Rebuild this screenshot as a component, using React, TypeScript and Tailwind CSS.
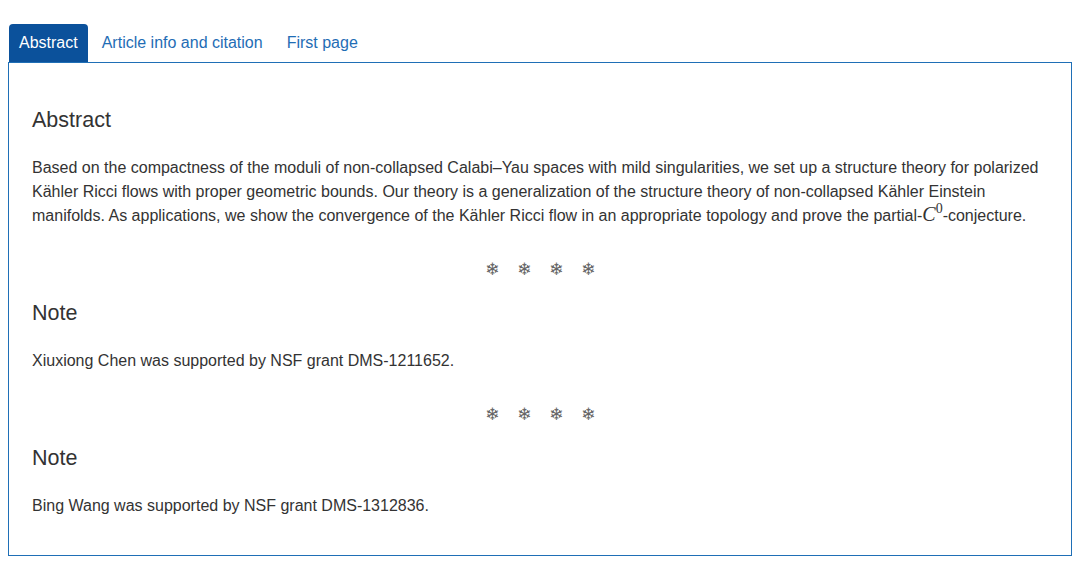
import { useState } from "react";

const tabs = ["Abstract", "Article info and citation", "First page"];

const Stars = () => (
  <div className="flex justify-center h-[14px] items-center text-[17px] leading-none text-[#666] font-['DejaVu_Sans',sans-serif] mt-[34px] mb-[24px]">
    <span className="w-[32px] text-center">❄</span>
    <span className="w-[32px] text-center">❄</span>
    <span className="w-[32px] text-center">❄</span>
    <span className="w-[32px] text-center">❄</span>
  </div>
);

const App = () => {
  const [active, setActive] = useState(0);

  return (
    <div className="w-[1080px] h-[566px] bg-white font-['Liberation_Sans',Arial,sans-serif] text-[#333] pt-[24px] pl-[8px] pr-[8px]">
      <div className="flex pl-[1px]">
        {tabs.map((t, i) => (
          <button
            key={t}
            onClick={() => setActive(i)}
            className={`h-[38px] px-[10px] mr-[4px] text-[16px] rounded-t-[4px] ${
              active === i ? "bg-[#0b519b] text-white" : "text-[#1f6db5]"
            }`}
          >
            {t}
          </button>
        ))}
      </div>
      <div className="w-[1064px] h-[494px] border border-[#1f6fb6] px-[23px] pt-[44px]">
        <h2 className="text-[21.5px] leading-[26px]">Abstract</h2>
        <p className="text-[16px] leading-[24px] mt-[23px]">
          Based on the compactness of the moduli of non-collapsed Calabi–Yau spaces with mild singularities, we set up a
          structure theory for polarized Kähler Ricci flows with proper geometric bounds. Our theory is a generalization of
          the structure theory of non-collapsed Kähler Einstein manifolds. As applications, we show the convergence of the
          Kähler Ricci flow in an appropriate topology and prove the partial-
          <span className="font-['Liberation_Serif',serif] italic text-[20px] leading-none">C</span>
          <span className="font-['Liberation_Serif',serif] text-[14px] leading-none relative top-[-8px]">0</span>-conjecture.
        </p>
        <Stars />
        <h2 className="text-[21.5px] leading-[26px]">Note</h2>
        <p className="text-[16px] leading-[24px] mt-[23px]">Xiuxiong Chen was supported by NSF grant DMS-1211652.</p>
        <Stars />
        <h2 className="text-[21.5px] leading-[26px]">Note</h2>
        <p className="text-[16px] leading-[24px] mt-[23px]">Bing Wang was supported by NSF grant DMS-1312836.</p>
      </div>
    </div>
  );
};

export default App;
